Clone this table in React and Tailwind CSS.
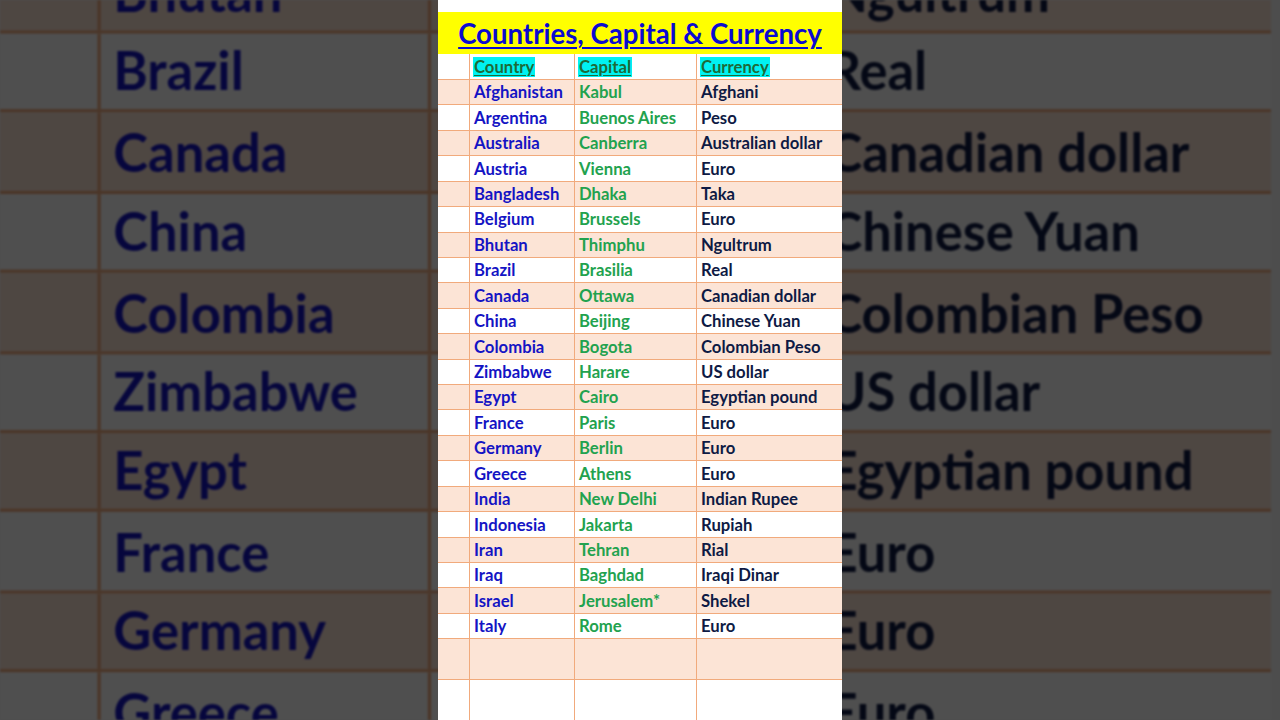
const ROWS = [
  ['Afghanistan', 'Kabul', 'Afghani'],
  ['Argentina', 'Buenos Aires', 'Peso'],
  ['Australia', 'Canberra', 'Australian dollar'],
  ['Austria', 'Vienna', 'Euro'],
  ['Bangladesh', 'Dhaka', 'Taka'],
  ['Belgium', 'Brussels', 'Euro'],
  ['Bhutan', 'Thimphu', 'Ngultrum'],
  ['Brazil', 'Brasilia', 'Real'],
  ['Canada', 'Ottawa', 'Canadian dollar'],
  ['China', 'Beijing', 'Chinese Yuan'],
  ['Colombia', 'Bogota', 'Colombian Peso'],
  ['Zimbabwe', 'Harare', 'US dollar'],
  ['Egypt', 'Cairo', 'Egyptian pound'],
  ['France', 'Paris', 'Euro'],
  ['Germany', 'Berlin', 'Euro'],
  ['Greece', 'Athens', 'Euro'],
  ['India', 'New Delhi', 'Indian Rupee'],
  ['Indonesia', 'Jakarta', 'Rupiah'],
  ['Iran', 'Tehran', 'Rial'],
  ['Iraq', 'Baghdad', 'Iraqi Dinar'],
  ['Israel', 'Jerusalem*', 'Shekel'],
  ['Italy', 'Rome', 'Euro'],
]

const cols = 'grid grid-cols-[32px_105px_122px_145px]'
const line = 'border-[#f1aa7c]'

function Sheet() {
  return (
    <div className="w-[404px] bg-white font-['Lato',sans-serif] font-bold text-[16.7px] leading-none">
      <div className="h-[12px] bg-white" />
      <div className="h-[42px] bg-[#ffff00] flex items-center justify-center pt-[2px]">
        <span className="text-[27.6px] text-[#0b0bd0] underline decoration-2 underline-offset-[3px]">
          Countries, Capital &amp; Currency
        </span>
      </div>

      {/* header */}
      <div className={`${cols} h-[26px] border-b ${line} bg-white`}>
        <div className={`border-r ${line}`} />
        {['Country', 'Capital', 'Currency'].map((h, i) => (
          <div key={h} className={`${i < 2 ? `border-r ${line}` : ''} flex items-center pl-[3px] pt-[1px]`}>
            <span className="bg-[#00f2f2] px-px py-[2px] text-[#1d6a38] underline underline-offset-2">
              {h}
            </span>
          </div>
        ))}
      </div>

      {ROWS.map(([country, capital, currency], idx) => (
        <div
          key={country}
          className={`${cols} h-[25.43px] border-b ${line} ${idx % 2 === 0 ? 'bg-[#fce4d6]' : 'bg-white'}`}
        >
          <div className={`border-r ${line}`} />
          <div className={`border-r ${line} flex items-center pl-[4px] pt-[1px] text-[#1414c4]`}>{country}</div>
          <div className={`border-r ${line} flex items-center pl-[4px] pt-[1px] text-[#22a24e]`}>{capital}</div>
          <div className="flex items-center pl-[4px] pt-[1px] text-[#0e1a44]">{currency}</div>
        </div>
      ))}

      <div className={`${cols} h-[41px] border-b ${line} bg-[#fce4d6]`}>
        <div className={`border-r ${line}`} />
        <div className={`border-r ${line}`} />
        <div className={`border-r ${line}`} />
        <div />
      </div>
      <div className={`${cols} h-[60px] bg-white`}>
        <div className={`border-r ${line}`} />
        <div className={`border-r ${line}`} />
        <div className={`border-r ${line}`} />
        <div />
      </div>
    </div>
  )
}

export default function App() {
  return (
    <div className="relative w-[1280px] h-[720px] overflow-hidden bg-[#4d4d4d]">
      {/* blurred, darkened zoom of the same sheet behind */}
      <div className="absolute inset-0 overflow-hidden brightness-[0.31] blur-[1px]">
        <div className="absolute left-0 top-[-778px] origin-top-left scale-[3.146]">
          <Sheet />
        </div>
      </div>

      <div className="relative flex justify-center h-full">
        <div className="w-[404px] h-full overflow-hidden">
          <Sheet />
        </div>
      </div>
    </div>
  )
}
